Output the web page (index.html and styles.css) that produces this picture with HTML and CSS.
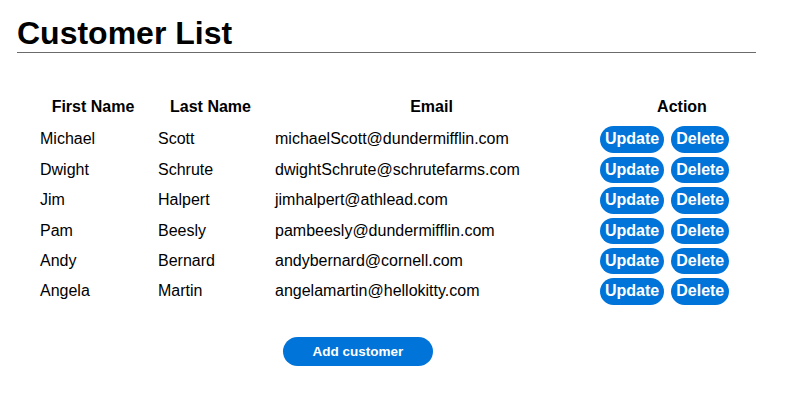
FILE: index.html
```html
<!DOCTYPE html>
<html>
<head>
<meta charset="utf-8">
<link rel="stylesheet" href="styles.css">
</head>
<body>
<div class="page">
  <h1 class="title">Customer List</h1>
  <table class="customers">
    <thead>
      <tr>
        <th class="c-first">First Name</th>
        <th class="c-last">Last Name</th>
        <th class="c-email">Email</th>
        <th class="c-action">Action</th>
      </tr>
    </thead>
    <tbody>
      <tr><td>Michael</td><td>Scott</td><td>michaelScott@dundermifflin.com</td><td><button class="btn">Update</button><button class="btn">Delete</button></td></tr>
      <tr><td>Dwight</td><td>Schrute</td><td>dwightSchrute@schrutefarms.com</td><td><button class="btn">Update</button><button class="btn">Delete</button></td></tr>
      <tr><td>Jim</td><td>Halpert</td><td>jimhalpert@athlead.com</td><td><button class="btn">Update</button><button class="btn">Delete</button></td></tr>
      <tr><td>Pam</td><td>Beesly</td><td>pambeesly@dundermifflin.com</td><td><button class="btn">Update</button><button class="btn">Delete</button></td></tr>
      <tr><td>Andy</td><td>Bernard</td><td>andybernard@cornell.com</td><td><button class="btn">Update</button><button class="btn">Delete</button></td></tr>
      <tr><td>Angela</td><td>Martin</td><td>angelamartin@hellokitty.com</td><td><button class="btn">Update</button><button class="btn">Delete</button></td></tr>
    </tbody>
  </table>
  <button class="add-btn">Add customer</button>
</div>
</body>
</html>
```
FILE: styles.css
```css
html, body {
  margin: 0;
  padding: 0;
  background: #ffffff;
}
body {
  font-family: "Liberation Sans", Arial, sans-serif;
  color: #000;
}
.page {
  padding: 15px 0 0 17px;
  width: 739px;
}
.title {
  margin: 0;
  font-size: 32px;
  line-height: 37px;
  font-weight: bold;
  border-bottom: 1px solid #6b6b6b;
}
.customers {
  margin-top: 36px;
  margin-left: 16px;
  width: 738px;
  border-spacing: 2px;
  font-size: 16px;
}
.customers th {
  padding: 7px 5px;
  font-weight: bold;
  text-align: center;
  line-height: 18.4px;
}
.customers td {
  padding: 1px 5px;
  text-align: left;
  vertical-align: middle;
  white-space: nowrap;
  line-height: 18.4px;
}
.c-first { width: 106px; }
.c-last { width: 105px; }
.c-email { width: 313px; }
.c-action { width: 164px; }
.btn {
  font-family: "Liberation Sans", Arial, sans-serif;
  font-size: 16px;
  font-weight: bold;
  color: #fff;
  background: #0074d9;
  border: none;
  border-radius: 14px;
  padding: 4px 5px;
  height: 26.4px;
  margin: 0 7px 0 0;
  line-height: 18.4px;
  vertical-align: middle;
}
.add-btn {
  display: block;
  margin: 29px 0 0 266px;
  width: 150px;
  height: 29px;
  font-family: "Liberation Sans", Arial, sans-serif;
  font-size: 13.5px;
  font-weight: bold;
  color: #fff;
  background: #0074d9;
  border: none;
  border-radius: 15px;
  padding: 0;
}
```
